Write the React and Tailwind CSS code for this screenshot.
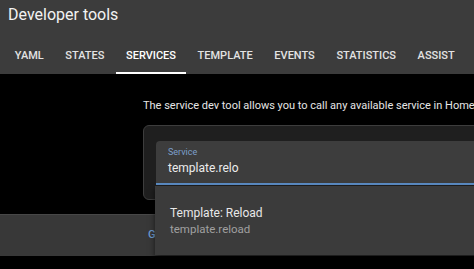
import React from 'react';

const tabs = ['YAML', 'STATES', 'SERVICES', 'TEMPLATE', 'EVENTS', 'STATISTICS', 'ASSIST'];

export default function App() {
  return (
    <div
      className="w-[474px] h-[269px] bg-black overflow-hidden relative"
      style={{ fontFamily: 'Roboto, "Liberation Sans", sans-serif' }}
    >
      {/* Header */}
      <div className="h-[74px] bg-[#3c3c3c] flex flex-col">
        <div className="h-[30px] pl-2 flex items-center text-[16px] text-[#f2f2f2]">Developer tools</div>
        <div className="h-[44px] pl-[4px] flex items-stretch pt-[8px]">
          {tabs.map((tab) => (
            <div
              key={tab}
              className={`relative px-[10.8px] flex items-center text-[11px] font-medium ${
                tab === 'SERVICES' ? 'text-white' : 'text-[#e3e3e3]'
              }`}
            >
              {tab}
              {tab === 'SERVICES' && (
                <span className="absolute left-[1px] right-[1px] bottom-0 h-[2px] bg-white" />
              )}
            </div>
          ))}
        </div>
      </div>

      {/* Content */}
      <div className="pl-[143px]">
        <p className="mt-[25px] text-[11px] leading-[14px] text-[#e6e6e6] whitespace-nowrap">
          The service dev tool allows you to call any available service in Home Assistant.
        </p>
        <div className="mt-[12px] w-[360px] border border-[#3d3d3d] rounded-[6px] bg-[#1f1f1f] pt-[15px] pl-[12px] pb-[14px]">
          <div className="relative">
            <div className="h-[44px] bg-[#3d3d3d] rounded-t-[4px] border-b-2 border-[#5b8cc4] pl-[12px] pt-[6px]">
              <div className="text-[9px] leading-[11px] text-[#7c9fc9]">Service</div>
              <div className="mt-[2px] text-[12px] leading-[16px] text-[#ececec]">template.relo</div>
            </div>
            {/* Dropdown */}
            <div className="absolute z-10 left-[-1px] top-[45px] w-[340px] h-[69px] bg-[#3b3b3b] shadow-[0_3px_6px_rgba(0,0,0,0.6)] pl-[15px] pt-[19px]">
              <div className="text-[12px] leading-[16px] text-[#e8e8e8]">Template: Reload</div>
              <div className="text-[11.5px] leading-[16px] text-[#a0a0a0]">template.reload</div>
            </div>
          </div>
        </div>
      </div>

      {/* Bottom action bar */}
      <div className="mt-[14px] h-[42px] bg-[#383838] border-t border-[#474747] flex items-center pl-[148px]">
        <span className="text-[11px] font-medium text-[#6d9bd0] tracking-[0.3px]">GO TO YAML MODE</span>
      </div>
    </div>
  );
}
